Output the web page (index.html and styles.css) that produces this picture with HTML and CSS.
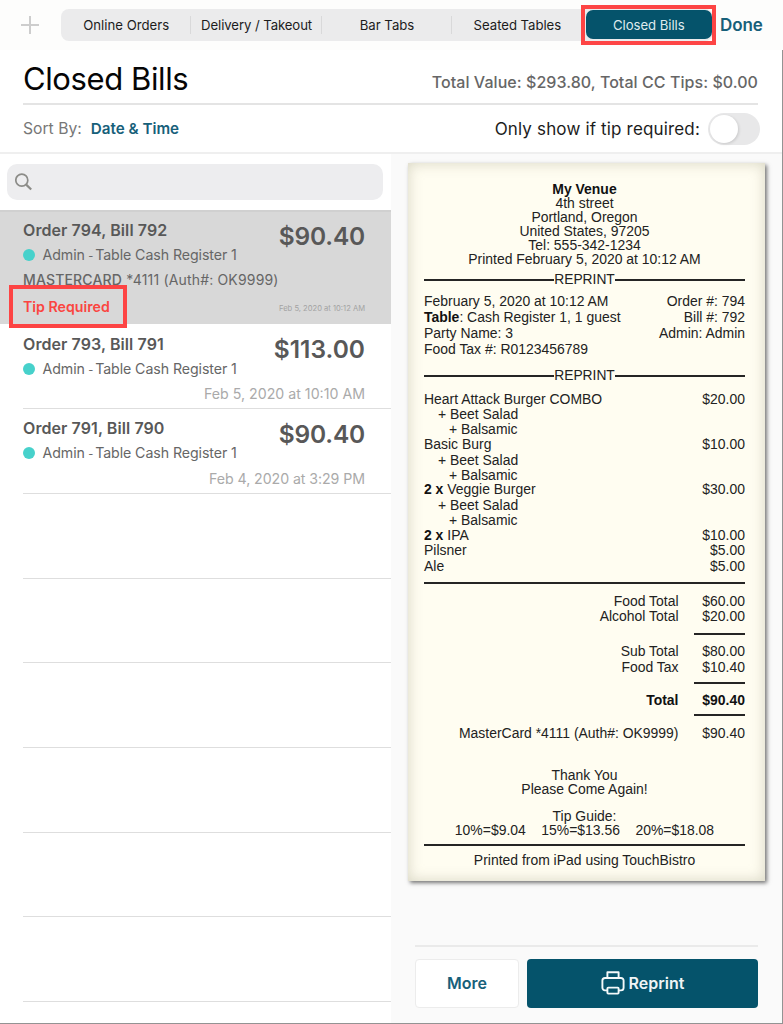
FILE: index.html
```html
<!DOCTYPE html>
<html lang="en">
<head>
<meta charset="utf-8">
<title>Closed Bills</title>
<link rel="stylesheet" href="styles.css">
</head>
<body>
<div class="app">
  <nav class="topbar">
    <svg class="plus" width="18" height="18" viewBox="0 0 18 18"><path d="M9 0v18M0 9h18" stroke="#cdcdcd" stroke-width="2" fill="none"/></svg>
    <div class="tabs">
      <div class="tab"><span>Online Orders</span></div>
      <div class="tab"><span class="t-delivery">Delivery / Takeout</span></div>
      <div class="tab"><span>Bar Tabs</span></div>
      <div class="tab"><span class="t-seated">Seated Tables</span></div>
      <div class="tab active"><span class="t-closed">Closed Bills</span><i class="callout callout-tab"></i></div>
    </div>
    <a class="done"><span>Done</span></a>
  </nav>

  <header class="header">
    <div class="title-row">
      <h1><span>Closed Bills</span></h1>
      <div class="totals"><span>Total Value: $293.80, Total CC Tips: $0.00</span></div>
    </div>
    <div class="filter-row">
      <span class="sort-label">Sort By:</span>
      <span class="sort-value">Date &amp; Time</span>
      <span class="only-show">Only show if tip required:</span>
      <span class="toggle"><i class="knob"></i></span>
    </div>
  </header>

  <main class="main">
    <section class="list">
      <div class="search">
        <svg width="18" height="18" viewBox="0 0 18 18" fill="none" stroke="#8c8c88" stroke-width="1.7"><circle cx="6.8" cy="7.2" r="6"/><path d="M11.2 11.6l5 4.9" stroke-width="2.2"/></svg>
      </div>
      <article class="bill selected">
        <div class="order"><span>Order 794, Bill 792</span></div>
        <div class="server"><i class="dot"></i><span>Admin <span class="dash">-</span> Table Cash Register 1</span></div>
        <div class="card"><b>MASTERCARD</b> <span>*4111 (Auth#: OK9999)</span></div>
        <div class="tip-row"><span class="tip">Tip Required<i class="callout callout-tip"></i></span><span class="date-small">Feb 5, 2020 at 10:12 AM</span></div>
        <div class="price">$90.40</div>
      </article>
      <article class="bill">
        <div class="order"><span>Order 793, Bill 791</span></div>
        <div class="server"><i class="dot"></i><span>Admin <span class="dash">-</span> Table Cash Register 1</span></div>
        <div class="date date-long">Feb 5, 2020 at 10:10 AM</div>
        <div class="price wide">$113.00</div>
      </article>
      <article class="bill">
        <div class="order"><span>Order 791, Bill 790</span></div>
        <div class="server"><i class="dot"></i><span>Admin <span class="dash">-</span> Table Cash Register 1</span></div>
        <div class="date">Feb 4, 2020 at 3:29 PM</div>
        <div class="price">$90.40</div>
      </article>
      <div class="bill"></div>
      <div class="bill"></div>
      <div class="bill"></div>
      <div class="bill"></div>
      <div class="bill"></div>
      <div class="bill"></div>
    </section>

    <section class="detail">
      <div class="receipt">
        <div class="center venue">
          <div><b>My Venue</b></div>
          <div>4th street</div>
          <div>Portland, Oregon</div>
          <div>United States, 97205</div>
          <div>Tel: 555-342-1234</div>
          <div>Printed February 5, 2020 at 10:12 AM</div>
        </div>
        <div class="banner banner-top">REPRINT</div>
        <div class="info">
          <div>
            <div>February 5, 2020 at 10:12 AM</div>
            <div><b>Table</b>: Cash Register 1, 1 guest</div>
            <div>Party Name: 3</div>
            <div>Food Tax #: R0123456789</div>
          </div>
          <div class="right">
            <div>Order #: 794</div>
            <div>Bill #: 792</div>
            <div>Admin: Admin</div>
          </div>
        </div>
        <div class="banner banner-mid">REPRINT</div>
        <div class="items">
          <div class="line"><span>Heart Attack Burger COMBO</span><span>$20.00</span></div>
          <div class="mod">+ Beet Salad</div>
          <div class="mod sub">+ Balsamic</div>
          <div class="line"><span>Basic Burg</span><span>$10.00</span></div>
          <div class="mod">+ Beet Salad</div>
          <div class="mod sub">+ Balsamic</div>
          <div class="line"><span><b>2 x</b> Veggie Burger</span><span>$30.00</span></div>
          <div class="mod">+ Beet Salad</div>
          <div class="mod sub">+ Balsamic</div>
          <div class="line"><span><b>2 x</b> IPA</span><span>$10.00</span></div>
          <div class="line"><span>Pilsner</span><span>$5.00</span></div>
          <div class="line"><span>Ale</span><span>$5.00</span></div>
        </div>
        <div class="rule"></div>
        <div class="sum"><span>Food Total</span><span>$60.00</span></div>
        <div class="sum"><span>Alcohol Total</span><span>$20.00</span></div>
        <div class="rule short"></div>
        <div class="sum"><span>Sub Total</span><span>$80.00</span></div>
        <div class="sum"><span>Food Tax</span><span>$10.40</span></div>
        <div class="rule short tight"></div>
        <div class="sum"><b>Total</b><b>$90.40</b></div>
        <div class="rule short tight"></div>
        <div class="sum"><span>MasterCard *4111 (Auth#: OK9999)</span><span>$90.40</span></div>
        <div class="center thanks">
          <div>Thank You</div>
          <div>Please Come Again!</div>
        </div>
        <div class="center guide">
          <div>Tip Guide:</div>
          <div class="tips"><span>10%=$9.04</span><span>15%=$13.56</span><span>20%=$18.08</span></div>
        </div>
        <div class="rule last"></div>
        <div class="center">Printed from iPad using TouchBistro</div>
      </div>

      <footer class="actions">
        <button class="btn more">More</button>
        <button class="btn reprint">
          <svg width="24" height="24" viewBox="0 0 24 24" fill="none" stroke="#f4f9fa" stroke-width="1.9" stroke-linejoin="round"><path d="M6.4 7V1.2h11.2V7"/><path d="M6.4 19.4H4a2.6 2.6 0 0 1-2.6-2.6V9.6A2.6 2.6 0 0 1 4 7h16a2.6 2.6 0 0 1 2.6 2.6v7.2a2.6 2.6 0 0 1-2.6 2.6h-2.4"/><rect x="6.4" y="16.6" width="11.2" height="6" rx=".8"/></svg>
          <span>Reprint</span>
        </button>
      </footer>
    </section>
  </main>
</div>
</body>
</html>
```

FILE: styles.css
```css
* { box-sizing: border-box; }
body { margin: 0; background: #fff; font-family: Inter, "Liberation Sans", sans-serif; }
.app { width: 783px; height: 1024px; overflow: hidden; display: flex; flex-direction: column; position: relative; }
.app::after { content: ""; position: absolute; left: 0; right: 0; top: 50px; bottom: 0; border-right: 1px solid #939393; border-bottom: 1px solid #939393; pointer-events: none; }

.topbar { height: 50px; flex: none; display: flex; align-items: center; background: #fdfdfc; }
.plus { margin-left: 21px; }
.tabs { margin-left: 22px; width: 652px; height: 32px; background: #ebebec; border-radius: 8px; display: grid; grid-template-columns: repeat(5, 1fr); }
.tab { display: flex; align-items: center; justify-content: center; font-size: 13.2px; color: #1c1c1c; position: relative; white-space: nowrap; }
.t-delivery { letter-spacing: -.1px; }
.t-seated { letter-spacing: -.05px; }
.tab:nth-child(-n+3)::after { content: ""; position: absolute; right: 0; top: 7px; width: 1px; height: 18px; background: #d9d9da; }
.active { background: #05536b; color: #dfeaed; border-radius: 7px; margin: 1px 1px 2px 3px; }
.t-closed { letter-spacing: -.05px; }
.done { margin-left: 7px; font-size: 17px; font-weight: 600; letter-spacing: -.1px; color: #17607a; }

.callout { position: absolute; border: 4px solid #fd4444; }
.callout-tab { left: -5px; right: -4px; top: -5px; bottom: -6px; }
.callout-tip { left: -14px; top: -13px; width: 118px; height: 43px; }

.header { height: 104px; flex: none; border-bottom: 2px solid #efefef; }
.title-row { height: 55px; margin: 0 25px 0 23px; border-bottom: 2px solid #e4e4e4; display: flex; justify-content: space-between; align-items: center; }
h1 { margin: 5px 0 0; font-size: 31px; line-height: 40px; font-weight: 400; letter-spacing: -.4px; color: #050505; }
.totals { margin-top: 11px; font-size: 16px; font-weight: 500; letter-spacing: .06px; color: #666; }
.filter-row { height: 47px; padding: 0 23px; display: flex; align-items: center; }
.sort-label { font-size: 15.7px; color: #777; }
.sort-value { margin-left: 9px; font-size: 15.2px; font-weight: 600; color: #17607a; }
.only-show { margin-left: auto; font-size: 17px; letter-spacing: .16px; color: #1c1c1c; }
.toggle { margin-left: 8px; width: 52px; height: 32px; border-radius: 16px; background: #e8e8e9; padding: 2px; }
.knob { display: block; width: 28px; height: 28px; border-radius: 50%; background: #fff; box-shadow: 1px 1px 3px #0002; }

.main { flex: 1; min-height: 0; display: flex; }
.list { width: 391px; background: #fff; }
.search { margin: 10px 8px 0 7px; height: 36px; border-radius: 10px; background: #ededef; padding: 9px 8px; }
.search svg { display: block; }
.bill { height: 84.7px; position: relative; padding: 7px 26px 0 23px; color: #666; }
.bill:not(.selected)::after { content: ""; position: absolute; left: 23px; right: 0; bottom: -1px; height: 1px; background: #dedede; }
.selected { margin-top: 10px; height: 113.5px; background: #d8d8d8; border-top: 2px solid #d0d0d0; padding-top: 5px; }
.order { height: 25.5px; line-height: 26px; font-size: 16px; font-weight: 600; letter-spacing: .08px; color: #585858; }
.server { height: 24px; line-height: 24px; font-size: 14.2px; display: flex; align-items: center; letter-spacing: -.08px; }
.server > span { position: relative; top: 1px; }
.dash { font-size: 11px; margin: 0 -2px 0 -.5px; }
.dot { width: 12px; height: 12px; border-radius: 50%; background: #47d1cb; margin-right: 7.5px; margin-top: 1px; }
.card { height: 26px; line-height: 26px; font-size: 14px; letter-spacing: .17px; }
.card b { font-weight: 500; }
.tip-row { display: flex; justify-content: space-between; align-items: center; height: 28px; }
.tip { position: relative; font-size: 14.2px; font-weight: 600; color: #fb4540; }
.date-small { font-size: 7.6px; color: #a3a3a3; margin-top: 3px; }
.date { line-height: 28px; font-size: 14.2px; letter-spacing: -.07px; color: #aaa; text-align: right; }
.date-long { letter-spacing: 0; }
.price { position: absolute; right: 26px; top: 10.5px; line-height: 31px; font-size: 24.5px; font-weight: 600; letter-spacing: -.2px; color: #585858; }
.wide { letter-spacing: 0; top: 10px; }
.selected .price { top: 9px; }

.detail { flex: 1; background: #fafafa; padding: 9px 17px 0 17px; display: flex; flex-direction: column; }
.receipt { width: 357px; height: 718px; padding: 19px 20px 0 16px; background: #fffdf1; box-shadow: inset 0 0 13px 1px #d2cfbdcc, 2px 2px 4px #0008; font: 13.95px/14px "Liberation Sans", Arial, sans-serif; color: #222; }
.receipt b { color: #111; }
.center { text-align: center; }
.banner { display: flex; align-items: center; height: 14px; font-size: 13.8px; }
.banner::before, .banner::after { content: ""; flex: 1; height: 2px; background: #252525; }
.banner-top { margin-top: 7.3px; }
.info { margin-top: 7.2px; line-height: 15.7px; display: flex; justify-content: space-between; height: 62.8px; }
.right { text-align: right; }
.banner-mid { margin-top: 11.5px; }
.items { margin-top: 9px; }
.line, .sum { display: flex; justify-content: space-between; height: 15.7px; line-height: 15.7px; }
.mod { height: 14.8px; line-height: 14.8px; padding-left: 14px; }
.sub { padding-left: 25px; }
.rule { height: 2px; background: #252525; margin: 7.7px 0 9.3px; }
.short { width: 51px; margin: 7.7px 0 9.3px auto; }
.tight { margin: 6.1px 0 9.2px auto; }
.sum { justify-content: flex-end; }
.sum > :last-child { width: 66.5px; text-align: right; }
.thanks { margin-top: 26.2px; }
.guide { margin-top: 13.7px; }
.tips { display: flex; justify-content: center; gap: 15.5px; }
.last { margin: 6.5px 0 7.2px; }

.actions { margin: 64px 8px 0 7px; border-top: 2px solid #eaeaea; padding-top: 12px; display: flex; gap: 8px; }
.btn { height: 49px; border-radius: 4px; border: 0; padding: 0; font: 600 16px/48px Inter, sans-serif; }
.more { width: 104px; background: #fff; border: 1px solid #ececec; color: #17607a; line-height: 46px; padding-bottom: 2px; }
.reprint { flex: 1; background: #05536b; color: #eef5f6; display: flex; align-items: center; justify-content: center; gap: 4px; padding-bottom: 2px; }
```
